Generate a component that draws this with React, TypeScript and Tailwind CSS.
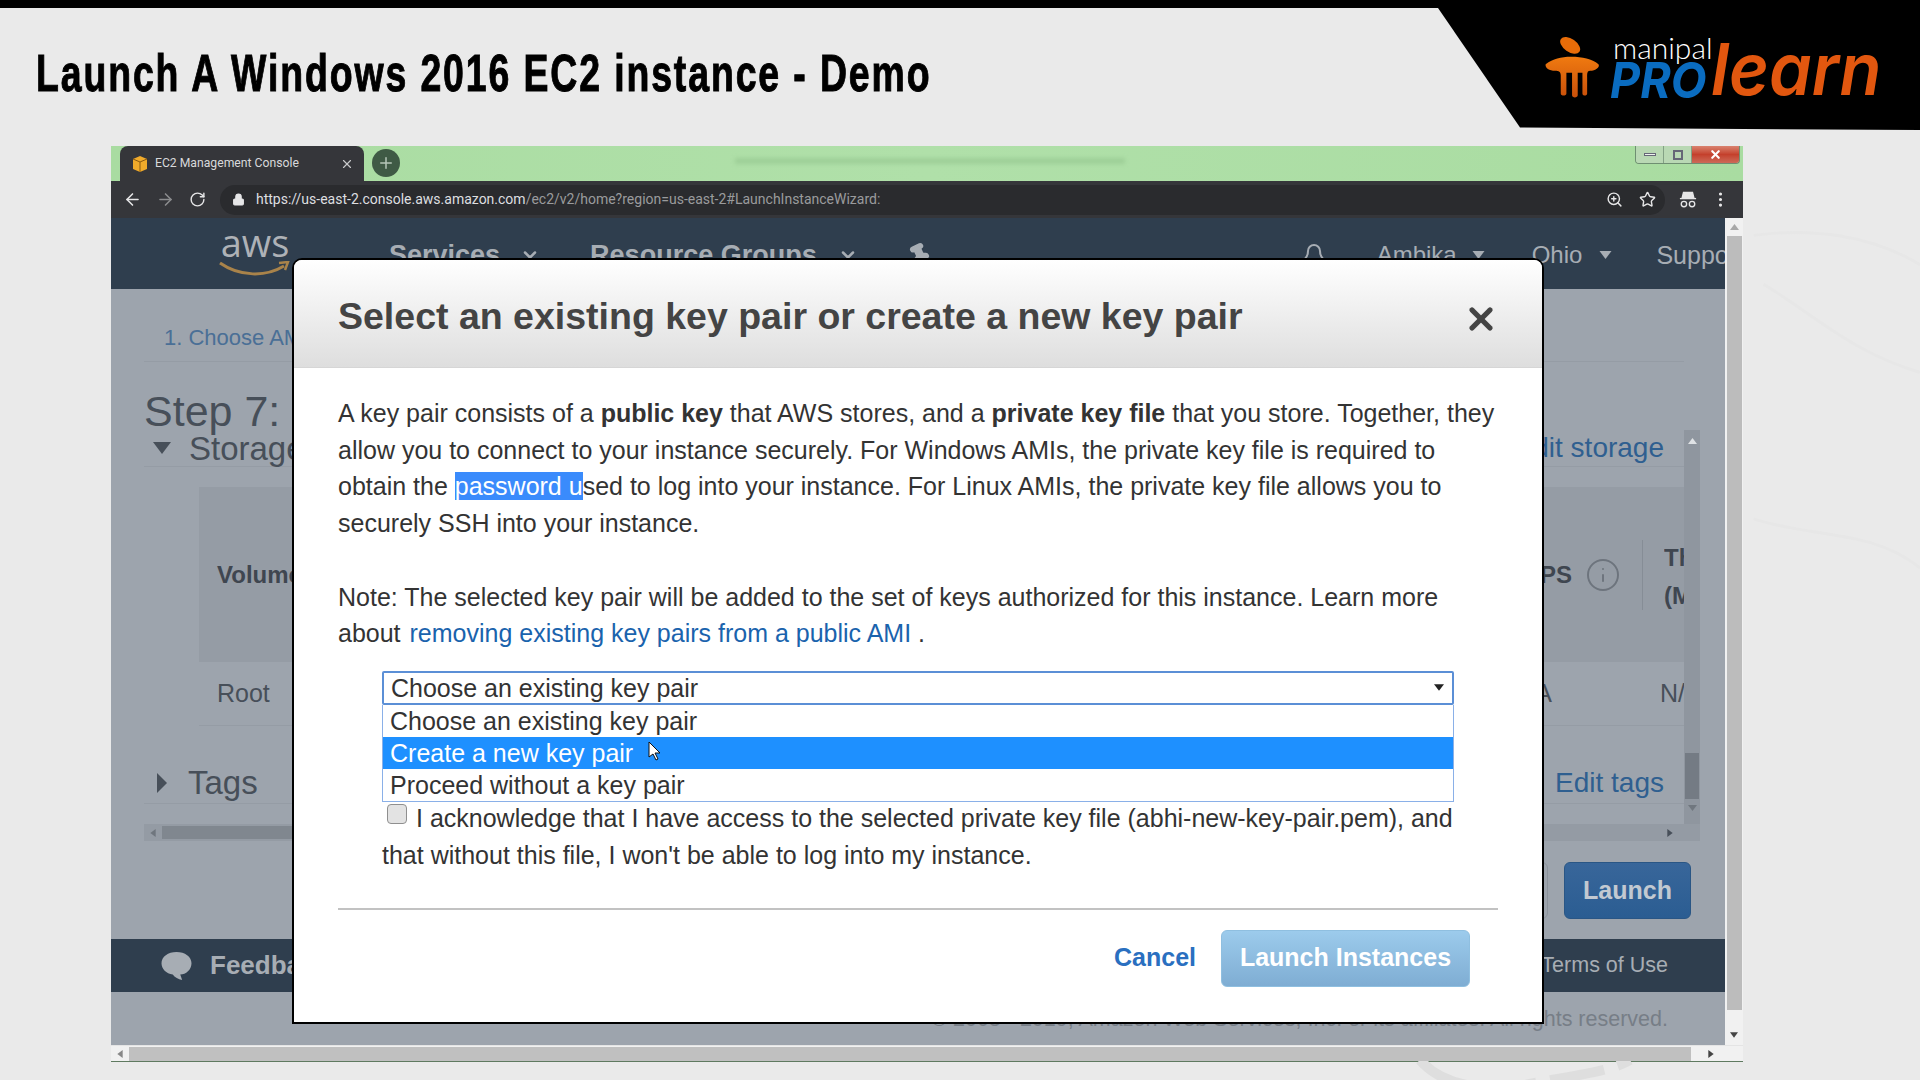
import React from 'react';
import { ArrowLeft, ArrowRight, RotateCw, Lock, ZoomIn, Star, MoreVertical, Plus, X, Info, Bell, Pin, ChevronDown } from 'lucide-react';

const Caret = ({ className }: { className: string }) => (
  <svg viewBox="0 0 12 8" className={className} fill="currentColor"><path d="M0 0h12L6 8z" /></svg>
);

const Logo = () => (
  <div className="relative w-[482px] h-[122px] bg-black [clip-path:polygon(0_0,100%_0,100%_100%,82px_98%)]">
    <svg viewBox="0 0 60 70" className="absolute left-[106px] top-[27px] w-[58px] h-[66px]">
      <defs>
        <linearGradient id="orange" x1="0" y1="0" x2="0" y2="1">
          <stop offset="0" stopColor="#f07a10" />
          <stop offset="1" stopColor="#c9500a" />
        </linearGradient>
      </defs>
      <ellipse cx="27" cy="11" rx="12" ry="7" transform="rotate(35 27 11)" fill="#e86c08" />
      <path d="M1 31c8-6 16-8 27-8 12 0 22 2 29 8 2 3-3 7-9 7-3 0-3 3-3 7v17c0 3-5 3-5 0V40h-5v24c0 3-6 3-6 0V40h-6v22c0 3-6 3-6 0V43c0-4-2-5-6-5-6 0-11-3-10-7z" fill="url(#orange)" />
    </svg>
    <span className="absolute left-[175px] top-[19px] text-[30px] leading-[40px] text-white font-['Lato',sans-serif] font-light">manipal</span>
    <span className="absolute left-[172px] top-[44px] text-[50px] leading-[56px] text-[#0a6cc0] font-['Inter',sans-serif] font-bold italic origin-left scale-x-[0.93]">PRO</span>
    <span className="absolute left-[273px] top-[21px] text-[72px] leading-[80px] text-[#e2570f] font-['Inter',sans-serif] font-semibold italic origin-left scale-x-[0.95]">learn</span>
  </div>
);

const TabStrip = () => (
  <div className="h-[35px] shrink-0 bg-gradient-to-r from-[#a9dca1] via-[#b0e0a9] to-[#a9dca1] flex items-end relative">
    <div className="ml-[9px] w-[244px] h-[35px] bg-[#35363a] rounded-t-[8px] flex items-center pl-[12px] pr-[10px] text-[#d8d9da]">
      <svg viewBox="0 0 16 18" className="w-[16px] h-[18px]">
        <path d="M8 1l7 3v10l-7 3-7-3V4z" fill="#f0ab2b" />
        <path d="M8 7v10M1 4l7 3 7-3" stroke="#8a5a10" strokeWidth="1" fill="none" />
      </svg>
      <span className="ml-[7px] text-[12.2px] font-['Roboto',sans-serif] whitespace-nowrap">EC2 Management Console</span>
      <X className="ml-auto w-[14px] h-[14px] text-[#c8c9ca]" />
    </div>
    <div className="ml-[8px] mb-[4px] w-[28px] h-[28px] rounded-full bg-[#3f5a45] flex items-center justify-center">
      <Plus className="w-[18px] h-[18px] text-[#b6c6b8]" />
    </div>
    <div className="ml-[335px] mb-[17px] w-[390px] h-[6px] bg-[#8dbf88] opacity-50 blur-[2px]" />
    <div className="absolute right-[3px] top-0 w-[105px] h-[18px] flex rounded-b-[4px] overflow-hidden border border-t-0 border-[#6f8f72]">
      <div className="w-[28px] bg-[#b9d8b4] flex items-center justify-center border-r border-[#83a185]">
        <div className="w-[12px] h-[3px] bg-[#eef2ee] border border-[#667]" />
      </div>
      <div className="w-[28px] bg-[#b9d8b4] flex items-center justify-center border-r border-[#83a185]">
        <div className="w-[10px] h-[10px] border-2 border-[#667]" />
      </div>
      <div className="flex-1 bg-gradient-to-b from-[#d9826f] via-[#c4402c] to-[#cc6a58] flex items-center justify-center">
        <X className="w-[13px] h-[13px] text-white" strokeWidth={4} />
      </div>
    </div>
  </div>
);

const AddressBar = () => (
  <div className="h-[37px] shrink-0 bg-[#35363a] flex items-center text-[#e6e6e7]">
    <ArrowLeft className="ml-[12px] w-[19px] h-[19px]" />
    <ArrowRight className="ml-[14px] w-[19px] h-[19px] text-[#8b8c8e]" />
    <RotateCw className="ml-[14px] w-[17px] h-[17px]" />
    <div className="ml-[14px] w-[1445px] h-[30px] rounded-full bg-[#2a2b2e] flex items-center pl-[12px] pr-[9px]">
      <Lock className="w-[13px] h-[13px]" fill="currentColor" />
      <span className="ml-[11px] text-[14px] font-['Roboto',sans-serif] whitespace-nowrap text-[#dedfe0]">
        https://us-east-2.console.aws.amazon.com<span className="text-[#9a9b9d]">/ec2/v2/home?region=us-east-2#LaunchInstanceWizard:</span>
      </span>
      <ZoomIn className="ml-auto w-[17px] h-[17px]" />
      <Star className="ml-[16px] w-[17px] h-[17px]" />
    </div>
    <svg viewBox="0 0 20 18" className="ml-[14px] w-[18px] h-[17px]" fill="none" stroke="currentColor" strokeWidth="1.5">
      <path d="M5 1h10l1.5 6h-13z" fill="currentColor" />
      <path d="M1 8h18" />
      <circle cx="5.5" cy="14" r="3" />
      <circle cx="14.5" cy="14" r="3" />
    </svg>
    <MoreVertical className="ml-[14px] w-[19px] h-[19px]" />
  </div>
);

const NavBar = () => (
  <div className="h-[71px] shrink-0 bg-[#2f3e4e] flex items-start text-[#a7adb4] text-[24px] font-['Liberation_Sans',sans-serif] overflow-hidden">
    <div className="ml-[108px] w-[72px] mt-[6px] flex flex-col items-center">
      <span className="text-[38px] leading-[36px] text-[#aeb2b7] font-['Open_Sans',sans-serif]">aws</span>
      <svg viewBox="0 0 72 16" className="w-[72px] h-[16px] mt-[1px]" fill="none">
        <path d="M1 2c20 14 46 14 64 3" stroke="#a9834a" strokeWidth="3" />
        <path d="M60 2l9-1-3 8" stroke="#a9834a" strokeWidth="2.5" />
      </svg>
    </div>
    <div className="ml-[98px] mt-[21px] flex items-center whitespace-nowrap leading-[32px]">
      <span className="text-[27px] font-bold">Services</span>
      <ChevronDown className="ml-[20px] w-[20px] h-[20px]" strokeWidth={3} />
      <span className="ml-[50px] text-[27px] font-bold">Resource Groups</span>
      <ChevronDown className="ml-[21px] w-[20px] h-[20px]" strokeWidth={3} />
      <Pin className="ml-[50px] w-[24px] h-[24px] -rotate-[25deg]" fill="currentColor" />
      <Bell className="ml-[370px] w-[24px] h-[26px]" />
      <span className="ml-[51px]">Ambika</span>
      <Caret className="ml-[15px] w-[13px] h-[8px]" />
      <span className="ml-[47px]">Ohio</span>
      <Caret className="ml-[17px] w-[13px] h-[8px]" />
      <span className="ml-[44px] text-[25px]">Support</span>
    </div>
  </div>
);

const TableContent = () => (
  <div className="w-[1540px] flex flex-col">
    <div className="h-[37px] border-b border-[#959ca5] flex items-center pr-[20px]">
      <Caret className="ml-[8px] w-[20px] h-[12px] text-[#474f59]" />
      <span className="ml-[17px] text-[33px] leading-[37px] pt-[1px] text-[#474f59]">Storage</span>
      <span className="ml-auto text-[28px] text-[#2f5f90]">Edit storage</span>
    </div>
    <div className="ml-[55px] mt-[20px] h-[175px] bg-[#959ca5] flex items-center pl-[18px] font-bold text-[24px] text-[#3f4650] overflow-hidden">
      <span>Volume Type</span>
      <span className="ml-auto">IOPS</span>
      <Info className="ml-[13px] w-[36px] h-[36px] text-[#6d747d]" strokeWidth={1.3} />
      <div className="ml-[21px] w-[1px] h-[70px] bg-[#868d96]" />
      <span className="ml-[21px] mr-[-34px] w-[54px] mt-[4px] overflow-hidden leading-[38px] whitespace-nowrap">Throughput<br />(MB/s)</span>
    </div>
    <div className="ml-[55px] h-[64px] border-b border-[#959ca5] flex items-center pl-[18px] text-[25px] text-[#474f59]">
      <span>Root</span>
      <span className="ml-auto">N/A</span>
      <span className="ml-[108px] w-[24px] overflow-hidden">N/A</span>
    </div>
    <div className="h-[78px] border-b border-[#959ca5] flex items-center pt-[36px] pr-[20px] mb-[20px]">
      <svg viewBox="0 0 10 20" className="ml-[13px] w-[10px] h-[20px] text-[#474f59]" fill="currentColor"><path d="M0 0l10 10L0 20z" /></svg>
      <span className="ml-[21px] text-[33px] text-[#474f59]">Tags</span>
      <span className="ml-auto text-[28px] text-[#2f5f90]">Edit tags</span>
    </div>
  </div>
);

const PageBehind = () => (
  <div className="flex-1 min-w-0 overflow-hidden flex flex-col bg-[#9da4ad] font-['Liberation_Sans',sans-serif]">
    <NavBar />
    <div className="h-[650px] shrink-0 flex flex-col pl-[33px]">
      <div className="h-[73px] w-[1540px] border-b border-[#959ca5] flex items-center pt-[24px] pl-[20px] text-[22px] text-[#4a6f96] shrink-0">
        1. Choose AMI
      </div>
      <div className="mt-[26px] -mb-[4px] h-[46px] text-[43px] leading-[46px] text-[#474f59] shrink-0 whitespace-nowrap">
        Step 7:<span className="ml-[16px]">Add Storage</span>
      </div>
      <div className="w-[1556px] flex shrink-0">
        <TableContent />
        <div className="w-[16px] h-[394px] bg-[#8f969f] flex flex-col items-center">
          <Caret className="mt-[8px] w-[9px] h-[6px] rotate-180 text-[#dfe2e5]" />
          <div className="mt-[309px] w-[14px] h-[46px] bg-[#747b84]" />
          <Caret className="mt-[6px] w-[9px] h-[6px] text-[#70777f]" />
        </div>
      </div>
      <div className="w-[1556px] h-[17px] bg-[#949ba4] flex items-center shrink-0">
        <Caret className="ml-[5px] w-[8px] h-[6px] rotate-90 text-[#6f767e]" />
        <div className="ml-[5px] w-[150px] h-[13px] bg-[#80878f]" />
        <Caret className="ml-auto mr-[26px] w-[8px] h-[6px] -rotate-90 text-[#474f59]" />
      </div>
      <div className="mt-[21px] w-[1547px] flex justify-end items-stretch h-[57px] shrink-0">
        <div className="mr-[16px] w-[100px] rounded-[6px] border border-[#8b929b]" />
        <div className="w-[127px] rounded-[6px] border border-[#2a5685] bg-gradient-to-b from-[#38669a] to-[#2b5d92] flex items-center justify-center text-[25px] font-bold text-[#c2c9d1]">
          Launch
        </div>
      </div>
    </div>
    <div className="h-[53px] shrink-0 bg-[#2f3e4e] flex items-center text-[#a7adb4]">
      <svg viewBox="0 0 34 32" className="ml-[49px] w-[33px] h-[30px]" fill="currentColor">
        <path d="M17 1c9 0 16 5 16 12s-6 12-12 12l2 6c-4-1-8-3-10-6C6 24 1 19 1 13 1 6 8 1 17 1z" />
      </svg>
      <span className="ml-[17px] text-[26px] font-bold">Feedback</span>
      <span className="ml-auto mr-[57px] text-[21.5px]">Terms of Use</span>
    </div>
    <div className="h-[51px] shrink-0 flex items-center justify-end pr-[57px] pt-[3px] text-[21.5px] text-[#777e87] whitespace-nowrap">
      © 2008 - 2019, Amazon Web Services, Inc. or its affiliates. All rights reserved.
    </div>
  </div>
);

const Scrollbars = () => (
  <div className="w-[18px] shrink-0 bg-[#f1f1f1] flex flex-col items-center">
    <Caret className="mt-[6px] w-[9px] h-[6px] rotate-180 text-[#a8a8a8]" />
    <div className="mt-[6px] w-[15px] h-[774px] bg-[#bcbcbc]" />
    <Caret className="mt-[22px] w-[8px] h-[6px] text-[#444]" />
  </div>
);

const Modal = () => (
  <div className="absolute left-[292px] top-[258px] w-[1252px] h-[766px] bg-white border-2 border-black rounded-t-[10px] flex flex-col font-['Liberation_Sans',sans-serif]">
    <div className="h-[108px] shrink-0 rounded-t-[8px] bg-gradient-to-b from-white to-[#dedede] border-b border-[#d6d6d6] flex items-center pl-[44px] pr-[43px]">
      <span className="text-[37.5px] font-bold text-[#444] whitespace-nowrap mt-[5px]">Select an existing key pair or create a new key pair</span>
      <X className="ml-auto mt-[10px] w-[36px] h-[36px] text-[#444]" strokeWidth={3.5} />
    </div>
    <div className="pt-[27px] px-[44px] flex-1 flex flex-col text-[25px] leading-[36.7px] text-[#333] whitespace-nowrap">
      <div>
        A key pair consists of a <b>public key</b> that AWS stores, and a <b>private key file</b> that you store. Together, they<br />
        allow you to connect to your instance securely. For Windows AMIs, the private key file is required to<br />
        obtain the <span className="bg-[#3a8bfc] text-white">password u</span>sed to log into your instance. For Linux AMIs, the private key file allows you to<br />
        securely SSH into your instance.
      </div>
      <div className="mt-[36.7px]">
        Note: The selected key pair will be added to the set of keys authorized for this instance. Learn more<br />
        about <span className="ml-[2px] text-[#1a63ad]">removing existing key pairs from a public AMI</span> .
      </div>
      <div className="ml-[44px] mt-[19px] w-[1072px]">
        <div className="h-[34px] border-2 border-[#5b8fd6] rounded-[2px] flex items-center pl-[7px] pr-[8px] leading-[30px]">
          Choose an existing key pair
          <Caret className="ml-auto w-[10px] h-[11px] text-[#222]" />
        </div>
        <div className="h-[97px] border border-t-0 border-[#8ab0e8] flex flex-col leading-[32px]">
          <div className="h-[32px] pl-[7px]">Choose an existing key pair</div>
          <div className="h-[32px] pl-[7px] bg-[#1e90ff] text-white flex items-center relative">
            Create a new key pair
            <svg viewBox="0 0 12 20" className="absolute left-[265px] top-[4px] w-[12px] h-[20px]">
              <path d="M1 1v15l4-3 3 6 2-1-3-6h5z" fill="#fff" stroke="#111" strokeWidth="1" />
            </svg>
          </div>
          <div className="h-[32px] pl-[7px]">Proceed without a key pair</div>
        </div>
        <div className="-mt-[2px]">
          <span className="inline-block w-[20px] h-[20px] ml-[5px] mr-[9px] align-[3px] rounded-[4px] border border-[#8f8f8f] bg-[#e3e3e3]" />
          I acknowledge that I have access to the selected private key file (abhi-new-key-pair.pem), and<br />
          that without this file, I won't be able to log into my instance.
        </div>
      </div>
      <div className="mt-[35px] h-[2px] bg-[#c2c2c2] shrink-0" />
      <div className="mt-[20px] flex items-center justify-end pr-[28px]">
        <span className="text-[25px] font-bold text-[#2a6fc0] -mt-[3px]">Cancel</span>
        <div className="ml-[25px] w-[249px] h-[57px] pb-[3px] rounded-[6px] border border-[#8fbfe0] bg-gradient-to-b from-[#9ccbec] to-[#7fadd3] flex items-center justify-center text-[25px] font-bold text-white">
          Launch Instances
        </div>
      </div>
    </div>
  </div>
);

export default function App() {
  return (
    <div className="relative w-[1920px] h-[1080px] overflow-hidden bg-[#eaeaea] flex flex-col">
      <svg viewBox="0 0 240 20" className="absolute left-[1410px] top-[1060px] w-[240px] h-[20px]" fill="none" stroke="#dedede" strokeWidth="10" strokeDasharray="55 14">
        <path d="M10 0c24 28 70 32 110 24s80-12 100-24" />
      </svg>
      <svg viewBox="0 0 180 500" className="absolute left-[1744px] top-[220px] w-[176px] h-[500px]" fill="none" stroke="#e7e7e7" strokeWidth="3">
        <path d="M10 10c60-8 120 0 170 30M20 60c50 30 90 70 160 90M10 300c60 20 120 10 170 50" />
      </svg>
      <div className="h-[8px] shrink-0 bg-black" />
      <div className="h-[138px] shrink-0 flex items-start justify-between">
        <h1 className="mt-[35px] ml-[36px] text-[52px] leading-[60px] tracking-[2.6px] font-['Liberation_Sans',sans-serif] font-bold text-black whitespace-nowrap origin-left scale-x-[0.72] [-webkit-text-stroke:1px_black]">
          Launch A Windows 2016 EC2 instance - Demo
        </h1>
        <Logo />
      </div>
      <div className="ml-[111px] w-[1632px] h-[916px] shrink-0 flex flex-col border-b border-[#5f7a60]">
        <TabStrip />
        <AddressBar />
        <div className="flex-1 flex min-h-0 relative">
          <PageBehind />
          <Scrollbars />
          <div className="absolute left-0 right-0 bottom-0 h-[16px] bg-[#f1f1f1] border-t border-[#e4e4e4] flex items-center">
            <Caret className="ml-[5px] w-[8px] h-[6px] rotate-90 text-[#888]" />
            <div className="ml-[5px] w-[1562px] h-[14px] bg-[#c0c0c0]" />
            <Caret className="ml-[16px] w-[8px] h-[6px] -rotate-90 text-[#444]" />
          </div>
        </div>
      </div>
      <Modal />
    </div>
  );
}
